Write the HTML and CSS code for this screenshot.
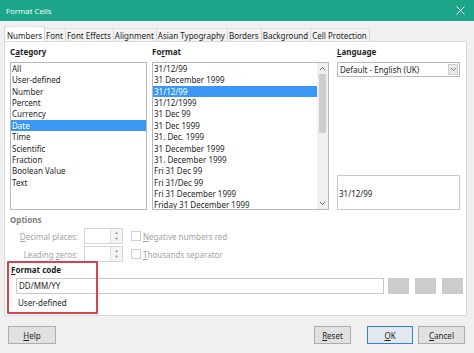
FILE: index.html
```html
<!DOCTYPE html>
<html lang="en">
<head>
    <meta charset="UTF-8">
    <meta name="viewport" content="width=device-width, initial-scale=1.0">
    <title>Format Cells</title>
    <link rel="stylesheet" href="styles.css">
</head>
<body>
    <div class="titlebar">
        <span>Format Cells</span>
        <svg class="close" width="9" height="9" viewBox="0 0 9 9"><path d="M0.5 0.5L8.5 8.5M8.5 0.5L0.5 8.5" stroke="#fff" stroke-width="1"/></svg>
    </div>
    <div class="tabs">
        <div class="tab active">Numbers</div>
        <div class="tab">Font</div>
        <div class="tab">Font Effects</div>
        <div class="tab">Alignment</div>
        <div class="tab">Asian Typography</div>
        <div class="tab">Borders</div>
        <div class="tab">Background</div>
        <div class="tab">Cell Protection</div>
    </div>
    <div class="panel">
        <div class="top">
            <div class="col">
                <div class="label">C<u>a</u>tegory</div>
                <ul class="list">
                    <li>All</li>
                    <li>User-defined</li>
                    <li>Number</li>
                    <li>Percent</li>
                    <li>Currency</li>
                    <li class="sel">Date</li>
                    <li>Time</li>
                    <li>Scientific</li>
                    <li>Fraction</li>
                    <li>Boolean Value</li>
                    <li>Text</li>
                </ul>
            </div>
            <div class="col">
                <div class="label">Fo<u>r</u>mat</div>
                <div class="list scroll">
                    <ul>
                        <li>31/12/99</li>
                        <li>31 December 1999</li>
                        <li class="sel">31/12/99</li>
                        <li>31/12/1999</li>
                        <li>31 Dec 99</li>
                        <li>31 Dec 1999</li>
                        <li>31. Dec. 1999</li>
                        <li>31 December 1999</li>
                        <li>31. December 1999</li>
                        <li>Fri 31 Dec 99</li>
                        <li>Fri 31/Dec 99</li>
                        <li>Fri 31 December 1999</li>
                        <li>Friday 31 December 1999</li>
                    </ul>
                    <div class="scrollbar">
                        <svg width="7" height="5" viewBox="0 0 7 5"><path d="M1 4L3.5 1.5L6 4" fill="none" stroke="#606060"/></svg>
                        <div class="track"><div class="thumb"></div></div>
                        <svg width="7" height="5" viewBox="0 0 7 5"><path d="M1 1L3.5 3.5L6 1" fill="none" stroke="#606060"/></svg>
                    </div>
                </div>
            </div>
            <div class="col lang">
                <div class="label"><u>L</u>anguage</div>
                <div class="select">
                    <span>Default - English (UK)</span>
                    <span class="arrow"><svg width="7" height="5" viewBox="0 0 7 5"><path d="M1 1L3.5 3.5L6 1" fill="none" stroke="#777"/></svg></span>
                </div>
                <div class="preview">31/12/99</div>
            </div>
        </div>

        <div class="options">
            <div class="heading">Options</div>
            <div class="opt-row">
                <span class="opt-label"><u>D</u>ecimal places:</span>
                <span class="spin"><span class="field"></span><span class="btns">&#9650;<br>&#9660;</span></span>
                <span class="check"></span>
                <span class="check-label"><u>N</u>egative numbers red</span>
            </div>
            <div class="opt-row">
                <span class="opt-label">Leading <u>z</u>eros:</span>
                <span class="spin"><span class="field"></span><span class="btns">&#9650;<br>&#9660;</span></span>
                <span class="check"></span>
                <span class="check-label"><u>T</u>housands separator</span>
            </div>
        </div>

        <div class="format-code">
            <div class="label"><u>F</u>ormat code</div>
            <div class="code-row">
                <div class="code-input">DD/MM/YY</div>
                <span class="tool"></span>
                <span class="tool"></span>
                <span class="tool"></span>
            </div>
            <div class="comment">User-defined</div>
            <div class="highlight"></div>
        </div>
    </div>
    <div class="footer">
        <button class="btn help"><u>H</u>elp</button>
        <button class="btn reset"><u>R</u>eset</button>
        <button class="btn ok"><u>O</u>K</button>
        <button class="btn cancel"><u>C</u>ancel</button>
    </div>
</body>
</html>
```

FILE: styles.css
```css
* {
    box-sizing: border-box;
}
body {
    margin: 0;
    width: 474px;
    height: 353px;
    overflow: hidden;
    background: #f0f0f0;
    font-family: "Noto Sans", "Open Sans", sans-serif;
    font-size: 8px;
    color: #1e1e1e;
}
u {
    text-decoration-thickness: 1px;
    text-underline-offset: 1px;
}
.titlebar {
    height: 21px;
    background: #1ba68a;
    color: #f4fbf9;
    display: flex;
    align-items: center;
    justify-content: space-between;
    padding: 0 9px 0 6px;
    font-size: 7.8px;
}
.tabs {
    display: flex;
    height: 20px;
    padding: 7px 0 0 4px;
}
.tab {
    height: 13px;
    line-height: 14px;
    padding: 0 2px 0 1px;
    border-top: 1px solid #e2e2e2;
    border-right: 1px solid #d6d6d6;
    background: #f3f3f3;
}
.tab.active {
    background: #fff;
    margin-top: -2px;
    height: 15px;
    line-height: 17px;
    padding: 0 2px;
    border-left: 1px solid #d6d6d6;
}
.panel {
    margin-left: 4px;
    width: 463px;
    height: 275px;
    background: #fff;
    border: 1px solid #d9d9d9;
    padding: 4px 3px 4px 5px;
}
.label {
    font-weight: bold;
    line-height: 12px;
    height: 12px;
    margin-bottom: 4px;
}
.top {
    display: grid;
    grid-template-columns: 137px 177px 126px;
    column-gap: 5px;
}
.lang {
    margin-left: 3px;
    display: flex;
    flex-direction: column;
}
.list {
    margin: 0;
    padding: 0;
    list-style: none;
    height: 148px;
    border: 1px solid #b9b9b9;
    overflow: hidden;
}
ul {
    margin: 0;
    padding: 0;
    list-style: none;
}
li {
    height: 11.37px;
    line-height: 11.37px;
    padding-left: 1px;
    white-space: nowrap;
}
li.sel {
    background: #3a98f4;
    color: #fff;
}
.scroll {
    display: flex;
}
.scroll ul {
    flex: 1;
}
.scrollbar {
    width: 11px;
    background: #f0f0f0;
    display: flex;
    flex-direction: column;
    align-items: center;
    padding: 3px 0;
}
.track {
    flex: 1;
    width: 100%;
    padding: 3px 2px 0;
}
.thumb {
    height: 59px;
    background: #cdcdcd;
}
.select {
    height: 15px;
    border: 1px solid #b9b9b9;
    display: flex;
    align-items: center;
    justify-content: space-between;
    padding-left: 2px;
}
.arrow {
    width: 10px;
    height: 11px;
    margin-right: 1px;
    background: #e8e8e8;
    border: 1px solid #cfcfcf;
    display: flex;
    align-items: center;
    justify-content: center;
}
.preview {
    margin-top: auto;
    height: 35px;
    border: 1px solid #c9c9c9;
    padding-left: 1px;
    display: flex;
    align-items: center;
    padding-top: 2px;
}
.options {
    margin-top: 4px;
}
.heading {
    font-weight: bold;
    color: #7c7c7c;
    line-height: 12px;
    margin-bottom: 2px;
}
.opt-row {
    display: flex;
    align-items: center;
    height: 16px;
    margin-bottom: 2px;
    color: #a3a3a3;
}
.opt-label {
    width: 68px;
    text-align: right;
}
.spin {
    display: flex;
    margin-left: 6px;
    height: 16px;
    border: 1px solid #d4d4d4;
}
.field {
    width: 25px;
}
.btns {
    width: 12px;
    background: #f4f4f4;
    border-left: 1px solid #e2e2e2;
    font-size: 4px;
    line-height: 6px;
    color: #8a8a8a;
    text-align: center;
    padding-top: 1px;
}
.check {
    width: 10px;
    height: 10px;
    border: 1px solid #cfcfcf;
    margin-left: 8px;
    margin-right: 2px;
}
.format-code {
    position: relative;
    margin-top: 2px;
    padding-left: 1px;
}
.format-code .label {
    margin-bottom: 2px;
}
.code-row {
    display: flex;
    gap: 4px;
    padding-left: 5px;
    height: 16px;
}
.code-input {
    width: 370px;
    border: 1px solid #c9c9c9;
    padding-left: 2px;
    line-height: 14px;
}
.tool {
    width: 21px;
    background: #cccccc;
}
.tool + .tool {
    margin-left: 2px;
}
.comment {
    margin-top: 3px;
    padding-left: 7px;
    line-height: 12px;
}
.highlight {
    position: absolute;
    left: -3px;
    top: -3px;
    width: 91px;
    height: 53px;
    border: 2px solid #d9414f;
    border-radius: 1px;
}
.footer {
    display: flex;
    padding: 10px 9px 0 8px;
}
.btn {
    font-family: inherit;
    font-size: 8px;
    color: #1e1e1e;
    height: 18px;
    background: #e1e1e1;
    border: 1px solid #adadad;
    padding: 0;
}
.help {
    width: 48px;
}
.reset {
    width: 37px;
    margin-left: auto;
}
.ok {
    width: 46px;
    margin-left: 16px;
    border-color: #2f84d8;
    background: #e3e8ee;
}
.cancel {
    width: 47px;
    margin-left: 5px;
}
```
